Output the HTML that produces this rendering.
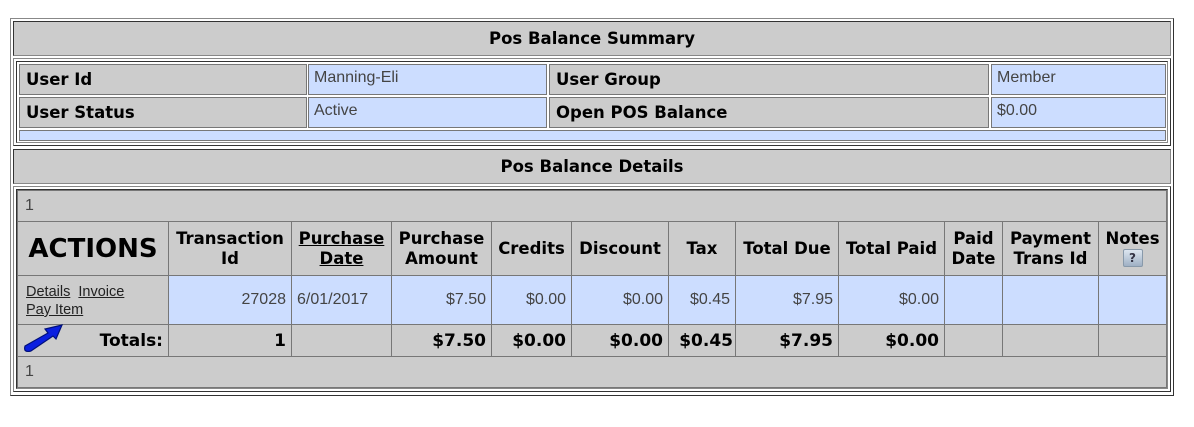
<!DOCTYPE html>
<html><head><meta charset="utf-8"><style>
body{margin:0;width:1194px;height:427px;background:#fff;position:relative;overflow:hidden;font-family:"DejaVu Sans",Verdana,sans-serif;}
.b{position:absolute;box-sizing:border-box;}
.o{border:1px solid #888;border-right-color:#333;border-bottom-color:#333;}
.i{border:1px solid #333;border-right-color:#888;border-bottom-color:#888;}
.g{background:#ccc;}
.bl{background:#ccddff;}
.c{position:absolute;box-sizing:border-box;border:1px solid #777;display:flex;align-items:center;}
.h{font-weight:bold;font-size:16.5px;color:#000;}
.v{font-family:"Liberation Sans",Arial,sans-serif;font-size:16px;color:#444;}
.ctr{justify-content:center;text-align:center;}
.r{justify-content:flex-end;padding-right:5px;}
.l{padding-left:6px;}
.t{font-size:17px;}
u{text-decoration:underline;}
</style></head><body>
<div class="b o" style="left:10px;top:18px;width:1164px;height:378px;"></div>
<div class="b i g h" style="left:13px;top:21px;width:1158px;height:35px;display:flex;align-items:center;justify-content:center;">Pos Balance Summary</div>
<div class="b o" style="left:13px;top:58px;width:1158px;height:88px;"></div>
<div class="b i" style="left:16px;top:61px;width:1152px;height:82px;"></div>
<div class="c g h l" style="left:19px;top:64px;width:288px;height:31px;">User Id</div>
<div class="c bl v" style="left:308px;top:64px;width:239px;height:31px;align-items:flex-start;padding:4px 5px;">Manning-Eli</div>
<div class="c g h l" style="left:549px;top:64px;width:440px;height:31px;">User Group</div>
<div class="c bl v" style="left:991px;top:64px;width:175px;height:31px;align-items:flex-start;padding:4px 5px;">Member</div>
<div class="c g h l" style="left:19px;top:97px;width:288px;height:31px;">User Status</div>
<div class="c bl v" style="left:308px;top:97px;width:239px;height:31px;align-items:flex-start;padding:4px 5px;">Active</div>
<div class="c g h l" style="left:549px;top:97px;width:440px;height:31px;">Open POS Balance</div>
<div class="c bl v" style="left:991px;top:97px;width:175px;height:31px;align-items:flex-start;padding:4px 5px;">$0.00</div>
<div class="c bl" style="left:19px;top:130px;width:1147px;height:11px;"></div>
<div class="b i g h" style="left:13px;top:149px;width:1158px;height:35px;display:flex;align-items:center;justify-content:center;">Pos Balance Details</div>
<div class="b o" style="left:13px;top:186px;width:1158px;height:206px;"></div>
<div class="b i g" style="left:16px;top:189px;width:1152px;height:200px;"></div>
<div class="c g v" style="left:17px;top:190px;width:1150px;height:32px;padding-left:7px;">1</div>
<div class="c g h ctr" style="left:17px;top:221px;width:152px;height:55px;font-size:26px;">ACTIONS</div>
<div class="c g h ctr" style="left:168px;top:221px;width:124px;height:55px;line-height:20px;">Transaction<br>Id</div>
<div class="c g h ctr" style="left:291px;top:221px;width:101px;height:55px;line-height:20px;"><u>Purchase<br>Date</u></div>
<div class="c g h ctr" style="left:391px;top:221px;width:101px;height:55px;line-height:20px;">Purchase<br>Amount</div>
<div class="c g h ctr" style="left:491px;top:221px;width:81px;height:55px;">Credits</div>
<div class="c g h ctr" style="left:571px;top:221px;width:98px;height:55px;">Discount</div>
<div class="c g h ctr" style="left:668px;top:221px;width:68px;height:55px;">Tax</div>
<div class="c g h ctr" style="left:735px;top:221px;width:104px;height:55px;">Total Due</div>
<div class="c g h ctr" style="left:838px;top:221px;width:107px;height:55px;">Total Paid</div>
<div class="c g h ctr" style="left:944px;top:221px;width:59px;height:55px;line-height:20px;">Paid<br>Date</div>
<div class="c g h ctr" style="left:1002px;top:221px;width:97px;height:55px;line-height:20px;">Payment<br>Trans Id</div>
<div class="c g h ctr" style="left:1098px;top:221px;width:69px;height:55px;flex-direction:column;line-height:18px;">Notes<span style="display:inline-block;width:18px;height:16px;background:linear-gradient(#dde6f0,#9fb0c4);border:1px solid #8899aa;border-radius:2px;font-size:12px;line-height:16px;color:#334;margin-top:1px;">?</span></div>
<div class="c g" style="left:17px;top:275px;width:152px;height:50px;font-family:'Liberation Sans',Arial,sans-serif;font-size:14.5px;color:#222;padding:7px 0 0 8px;line-height:18px;display:block;"><u>Details</u>&nbsp; <u>Invoice</u><br><u>Pay Item</u></div>
<div class="c bl v r" style="left:168px;top:275px;width:124px;height:50px;">27028</div>
<div class="c bl v" style="left:291px;top:275px;width:101px;height:50px;padding-left:5px;">6/01/2017</div>
<div class="c bl v r" style="left:391px;top:275px;width:101px;height:50px;">$7.50</div>
<div class="c bl v r" style="left:491px;top:275px;width:81px;height:50px;">$0.00</div>
<div class="c bl v r" style="left:571px;top:275px;width:98px;height:50px;">$0.00</div>
<div class="c bl v r" style="left:668px;top:275px;width:68px;height:50px;">$0.45</div>
<div class="c bl v r" style="left:735px;top:275px;width:104px;height:50px;">$7.95</div>
<div class="c bl v r" style="left:838px;top:275px;width:107px;height:50px;">$0.00</div>
<div class="c bl" style="left:944px;top:275px;width:59px;height:50px;"></div>
<div class="c bl" style="left:1002px;top:275px;width:97px;height:50px;"></div>
<div class="c bl" style="left:1098px;top:275px;width:69px;height:50px;"></div>
<div class="c g h t r" style="left:17px;top:324px;width:152px;height:33px;">Totals:</div>
<div class="c g h t r" style="left:168px;top:324px;width:124px;height:33px;">1</div>
<div class="c g" style="left:291px;top:324px;width:101px;height:33px;"></div>
<div class="c g h t r" style="left:391px;top:324px;width:101px;height:33px;">$7.50</div>
<div class="c g h t r" style="left:491px;top:324px;width:81px;height:33px;">$0.00</div>
<div class="c g h t r" style="left:571px;top:324px;width:98px;height:33px;">$0.00</div>
<div class="c g h t r" style="left:668px;top:324px;width:68px;height:33px;padding-right:2px;">$0.45</div>
<div class="c g h t r" style="left:735px;top:324px;width:104px;height:33px;">$7.95</div>
<div class="c g h t r" style="left:838px;top:324px;width:107px;height:33px;">$0.00</div>
<div class="c g" style="left:944px;top:324px;width:59px;height:33px;"></div>
<div class="c g" style="left:1002px;top:324px;width:97px;height:33px;"></div>
<div class="c g" style="left:1098px;top:324px;width:69px;height:33px;"></div>
<div class="c g v" style="left:17px;top:356px;width:1150px;height:32px;padding-left:7px;">1</div>
<svg style="position:absolute;left:20px;top:320px" width="46" height="34" viewBox="0 0 46 34">
<path d="M5 26 L28 13 L25 9 L42 5 L36 19 L33 16 L11 31 Q3 33 5 26 Z" fill="#0a1fe0" stroke="#00107a" stroke-width="1.2"/>
</svg>
</body></html>
